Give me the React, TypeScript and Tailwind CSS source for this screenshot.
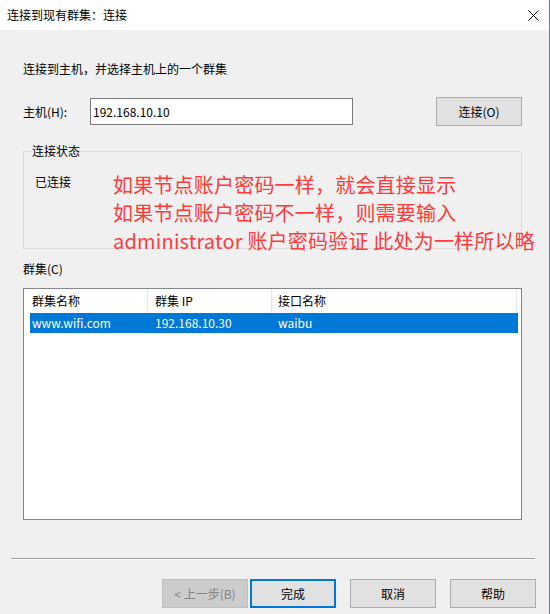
const ui = "font-['Noto_Sans_CJK_SC','Noto_Sans',sans-serif]";

function CloseIcon() {
  return (
    <svg width="11" height="11" viewBox="0 0 11 11" fill="none" stroke="#000" strokeWidth="1">
      <path d="M0.5 0.5l10 10M10.5 0.5l-10 10" />
    </svg>
  );
}

function Button({ label, primary, disabled, className = "" }: { label: string; primary?: boolean; disabled?: boolean; className?: string }) {
  const tone = disabled
    ? "bg-[#cccccc] border border-[#bfbfbf] text-[#838383]"
    : primary
      ? "bg-[#e1e1e1] border-2 border-[#0078d7] text-black"
      : "bg-[#e1e1e1] border border-[#adadad] text-black";
  return (
    <button className={`w-[86px] h-[29px] flex items-center justify-center text-[12px] leading-[16px] ${tone} ${className}`}>
      {label}
    </button>
  );
}

const clusters = [{ name: "www.wifi.com", ip: "192.168.10.30", iface: "waibu" }];

export default function App() {
  return (
    <div className={`relative w-[550px] h-[614px] bg-[#f0f0f0] border-r border-[#5f7a9c] flex flex-col text-black ${ui}`}>
      {/* title bar */}
      <div className="h-[30px] bg-white flex items-center justify-between pl-[7px] pr-[10px]">
        <span className="text-[12px] leading-[16px]">连接到现有群集：连接</span>
        <CloseIcon />
      </div>

      <div className="flex flex-col pl-[23px] pr-[27px]">
        <p className="mt-[31px] text-[12px] leading-[16px]">连接到主机，并选择主机上的一个群集</p>

        <div className="mt-[20px] flex items-center">
          <span className="w-[67px] text-[12px] leading-[16px]">主机(H):</span>
          <div className="w-[263px] h-[27px] bg-white border border-[#7a7a7a] flex items-center pl-[2px] text-[12px] leading-[16px]">
            192.168.10.10
          </div>
          <Button label="连接(O)" className="ml-auto" />
        </div>

        <fieldset className="mt-[17px] h-[106px] border border-[#dcdcdc] px-[8px]">
          <legend className="text-[12px] leading-[16px] px-0">连接状态</legend>
          <p className="mt-[15px] ml-[3px] text-[12px] leading-[16px]">已连接</p>
        </fieldset>

        <p className="mt-[12px] text-[12px] leading-[16px]">群集(C)</p>

        <div className="mt-[11px] h-[232px] bg-white border border-[#828790] flex flex-col">
          <div className="h-[24px] grid grid-cols-[124px_124px_245px] text-[12px] leading-[16px]">
            <div className="flex items-center pl-[8px] border-r border-[#e5e5e5]">群集名称</div>
            <div className="flex items-center pl-[7px] border-r border-[#e5e5e5]">群集 IP</div>
            <div className="flex items-center pl-[6px] border-r border-[#e5e5e5]">接口名称</div>
          </div>
          {clusters.map((c) => (
            <div key={c.name} className="ml-[6px] w-[488px] h-[20px] bg-[#0078d7] text-white grid grid-cols-[118px_124px_246px] text-[12px] leading-[16px]">
              <div className="flex items-center pl-[2px]">{c.name}</div>
              <div className="flex items-center pl-[7px]">{c.ip}</div>
              <div className="flex items-center pl-[6px]">{c.iface}</div>
            </div>
          ))}
        </div>
      </div>

      <div className="mt-[38px] ml-[11px] mr-[14px] h-[2px] border-t border-[#a0a0a0] border-b border-b-white" />

      <div className="mt-[19px] flex justify-end pr-[13px]">
        <Button label="< 上一步(B)" disabled />
        <Button label="完成" primary className="ml-[2px]" />
        <Button label="取消" className="ml-[14px]" />
        <Button label="帮助" className="ml-[14px]" />
      </div>

      {/* red annotation over the status box */}
      <div className="absolute left-[113px] top-[171px] text-[20px] leading-[28px] text-[#ff3b3b] whitespace-nowrap tracking-[0.2px]">
        <p>如果节点账户密码一样，就会直接显示</p>
        <p>如果节点账户密码不一样，则需要输入</p>
        <p>administrator 账户密码验证 此处为一样所以略</p>
      </div>
    </div>
  );
}
